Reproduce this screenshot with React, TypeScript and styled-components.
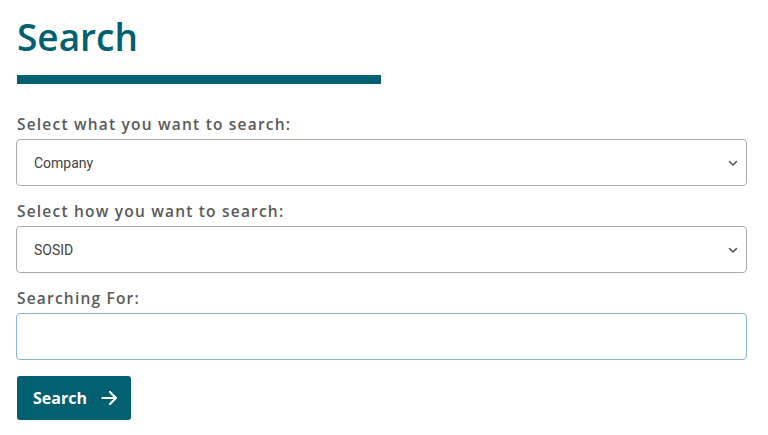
import React from "react";
import styled, { createGlobalStyle } from "styled-components";

const Global = createGlobalStyle`
  html, body { margin: 0; padding: 0; background: #fff; }
  body { font-family: "Open Sans", "Liberation Sans", sans-serif; }
  * { box-sizing: border-box; }
`;

const Page = styled.div`
  padding: 14px 21px 0 16px;
  display: flex;
  flex-direction: column;
`;

const Title = styled.h1`
  margin: 0 0 0 1px;
  font-family: "Open Sans", sans-serif;
  font-weight: 600;
  font-size: 37px;
  line-height: 46px;
  color: #00606f;
  letter-spacing: 0;
`;

const Rule = styled.div`
  margin: 15px 0 0 1px;
  width: 364px;
  height: 9px;
  background: #00606f;
`;

const Form = styled.form`
  margin-top: 29px;
  display: flex;
  flex-direction: column;
`;

const Label = styled.label`
  display: block;
  margin: 0 0 4px 1px;
  font-family: "Open Sans", sans-serif;
  font-weight: 600;
  font-size: 15.5px;
  line-height: 22px;
  color: #5a5a5a;
  letter-spacing: 1.2px;
`;

const Field = styled.div`
  position: relative;
  margin-bottom: 14px;
`;

const Select = styled.select`
  appearance: none;
  width: 100%;
  height: 47px;
  padding: 0 30px 0 17px;
  border: 1px solid #a9adb3;
  border-radius: 4px;
  background: #fff;
  font-family: "Roboto", sans-serif;
  font-size: 14px;
  color: #444;
  outline: none;
`;

const Chevron = styled.svg`
  position: absolute;
  right: 9px;
  top: 20px;
  width: 10px;
  height: 8px;
  pointer-events: none;
`;

const Input = styled.input`
  width: 100%;
  height: 47px;
  padding: 0 17px;
  border: 1px solid #89b4cc;
  border-radius: 4px;
  background: #fff;
  font-family: "Roboto", sans-serif;
  font-size: 14px;
  outline: none;
`;

const Button = styled.button`
  align-self: flex-start;
  margin: 2px 0 0 1px;
  height: 44px;
  padding: 0 13px 0 16px;
  display: flex;
  align-items: center;
  gap: 14px;
  border: none;
  border-radius: 3px;
  background: #00606f;
  color: #fff;
  font-family: "Open Sans", sans-serif;
  font-weight: 700;
  font-size: 16px;
  cursor: pointer;
`;

const Arrow = () => (
  <svg width="17" height="16" viewBox="0 0 17 16" fill="none" stroke="#fff" strokeWidth="2.2" strokeLinecap="round" strokeLinejoin="round">
    <path d="M1.5 8h13.5M9 2l6 6-6 6" />
  </svg>
);

const SelectField = ({ id, label, value, options }: { id: string; label: string; value: string; options: string[] }) => (
  <>
    <Label htmlFor={id}>{label}</Label>
    <Field>
      <Select id={id} defaultValue={value}>
        {options.map((o) => (
          <option key={o}>{o}</option>
        ))}
      </Select>
      <Chevron viewBox="0 0 10 8" fill="none" stroke="#555" strokeWidth="1.6" strokeLinecap="round" strokeLinejoin="round">
        <path d="M1.5 2.5L5 6l3.5-3.5" />
      </Chevron>
    </Field>
  </>
);

export default function App() {
  return (
    <Page>
      <Global />
      <Title>Search</Title>
      <Rule />
      <Form onSubmit={(e) => e.preventDefault()}>
        <SelectField id="what" label="Select what you want to search:" value="Company" options={["Company", "Individual"]} />
        <SelectField id="how" label="Select how you want to search:" value="SOSID" options={["SOSID", "Name"]} />
        <Label htmlFor="for">Searching For:</Label>
        <Field>
          <Input id="for" type="text" />
        </Field>
        <Button type="submit">
          Search
          <Arrow />
        </Button>
      </Form>
    </Page>
  );
}
